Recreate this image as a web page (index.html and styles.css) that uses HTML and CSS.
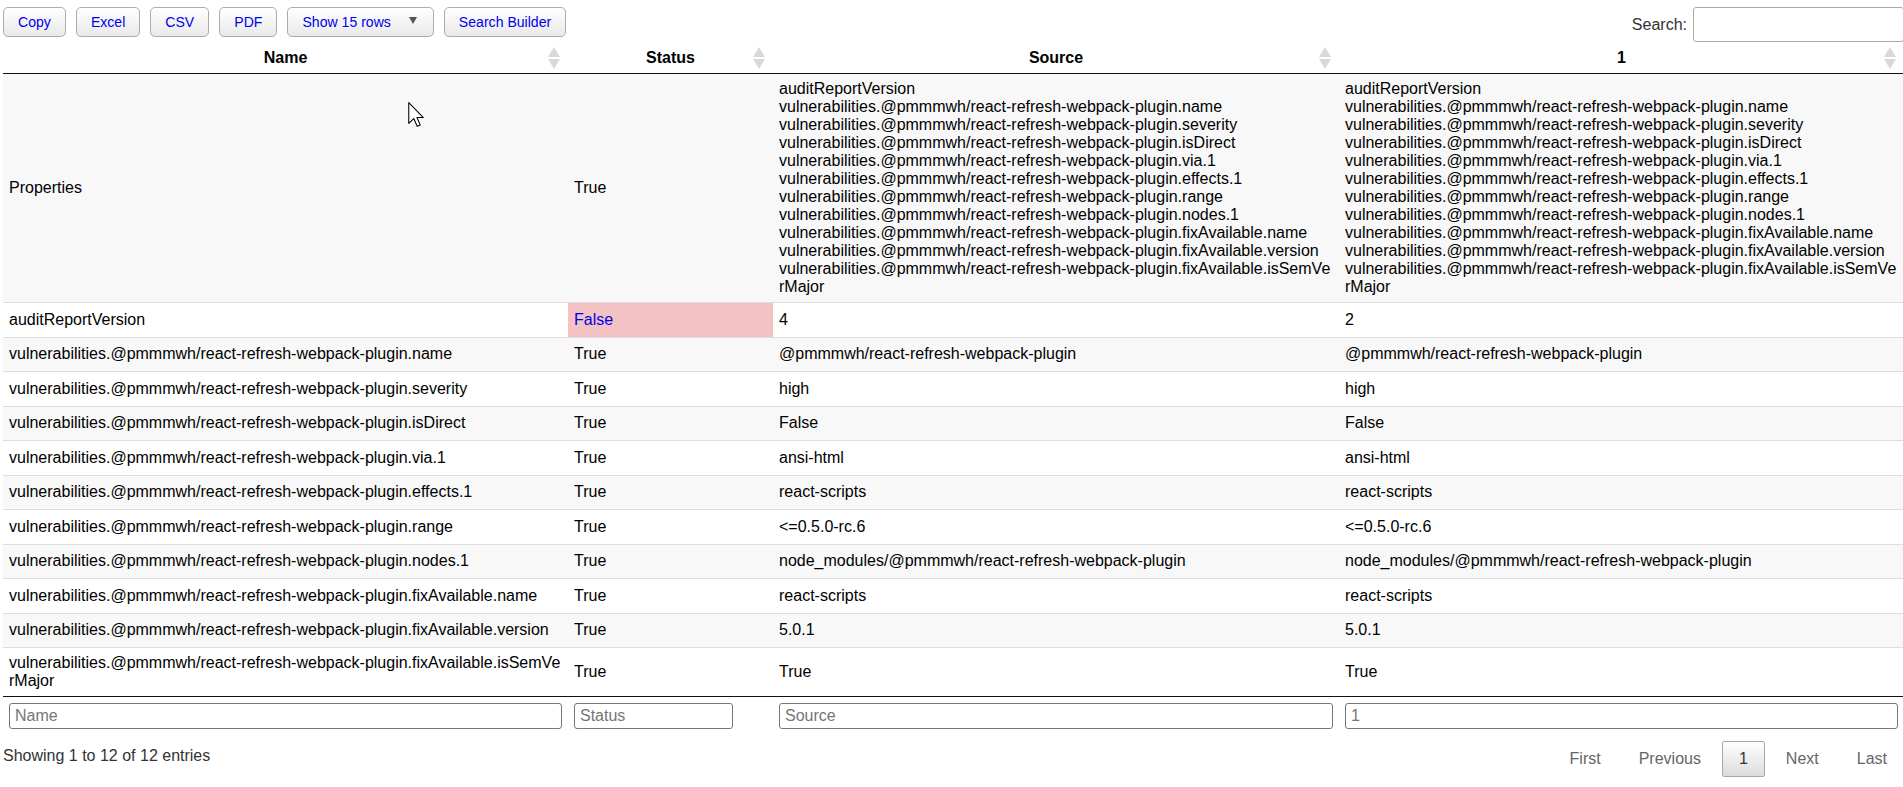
FILE: index.html
```html
<!DOCTYPE html>
<html>
<head>
<meta charset="utf-8">
<title>Comparison</title>
<link rel="stylesheet" href="styles.css">
</head>
<body>
<div class="wrap">
  <div class="toolbar">
    <div class="btns">
      <button class="dtb">Copy</button>
      <button class="dtb">Excel</button>
      <button class="dtb">CSV</button>
      <button class="dtb">PDF</button>
      <button class="dtb dtb-coll">Show 15 rows<svg class="darr" viewBox="0 0 8 7"><polygon points="0,0 8,0 4,7" fill="#555"/></svg></button>
      <button class="dtb">Search Builder</button>
    </div>
    <label class="search">Search:<input type="search" class="search-input"></label>
  </div>

  <table class="dt">
    <colgroup>
      <col class="c-name">
      <col class="c-status">
      <col class="c-source">
      <col class="c-one">
    </colgroup>
    <thead>
      <tr>
        <th>Name<svg class="sort" viewBox="0 0 12 22"><polygon points="0,10 6,0 12,10" /><polygon points="0,12 12,12 6,22" /></svg></th>
        <th>Status<svg class="sort" viewBox="0 0 12 22"><polygon points="0,10 6,0 12,10" /><polygon points="0,12 12,12 6,22" /></svg></th>
        <th>Source<svg class="sort" viewBox="0 0 12 22"><polygon points="0,10 6,0 12,10" /><polygon points="0,12 12,12 6,22" /></svg></th>
        <th>1<svg class="sort" viewBox="0 0 12 22"><polygon points="0,10 6,0 12,10" /><polygon points="0,12 12,12 6,22" /></svg></th>
      </tr>
    </thead>
    <tbody>
      <tr>
        <td>Properties</td>
        <td>True</td>
        <td>auditReportVersion<br>vulnerabilities.@pmmmwh/react-refresh-webpack-plugin.name<br>vulnerabilities.@pmmmwh/react-refresh-webpack-plugin.severity<br>vulnerabilities.@pmmmwh/react-refresh-webpack-plugin.isDirect<br>vulnerabilities.@pmmmwh/react-refresh-webpack-plugin.via.1<br>vulnerabilities.@pmmmwh/react-refresh-webpack-plugin.effects.1<br>vulnerabilities.@pmmmwh/react-refresh-webpack-plugin.range<br>vulnerabilities.@pmmmwh/react-refresh-webpack-plugin.nodes.1<br>vulnerabilities.@pmmmwh/react-refresh-webpack-plugin.fixAvailable.name<br>vulnerabilities.@pmmmwh/react-refresh-webpack-plugin.fixAvailable.version<br>vulnerabilities.@pmmmwh/react-refresh-webpack-plugin.fixAvailable.isSemVerMajor</td>
        <td>auditReportVersion<br>vulnerabilities.@pmmmwh/react-refresh-webpack-plugin.name<br>vulnerabilities.@pmmmwh/react-refresh-webpack-plugin.severity<br>vulnerabilities.@pmmmwh/react-refresh-webpack-plugin.isDirect<br>vulnerabilities.@pmmmwh/react-refresh-webpack-plugin.via.1<br>vulnerabilities.@pmmmwh/react-refresh-webpack-plugin.effects.1<br>vulnerabilities.@pmmmwh/react-refresh-webpack-plugin.range<br>vulnerabilities.@pmmmwh/react-refresh-webpack-plugin.nodes.1<br>vulnerabilities.@pmmmwh/react-refresh-webpack-plugin.fixAvailable.name<br>vulnerabilities.@pmmmwh/react-refresh-webpack-plugin.fixAvailable.version<br>vulnerabilities.@pmmmwh/react-refresh-webpack-plugin.fixAvailable.isSemVerMajor</td>
      </tr>
      <tr>
        <td>auditReportVersion</td>
        <td class="bad">False</td>
        <td>4</td>
        <td>2</td>
      </tr>
      <tr>
        <td>vulnerabilities.@pmmmwh/react-refresh-webpack-plugin.name</td>
        <td>True</td>
        <td>@pmmmwh/react-refresh-webpack-plugin</td>
        <td>@pmmmwh/react-refresh-webpack-plugin</td>
      </tr>
      <tr>
        <td>vulnerabilities.@pmmmwh/react-refresh-webpack-plugin.severity</td>
        <td>True</td>
        <td>high</td>
        <td>high</td>
      </tr>
      <tr>
        <td>vulnerabilities.@pmmmwh/react-refresh-webpack-plugin.isDirect</td>
        <td>True</td>
        <td>False</td>
        <td>False</td>
      </tr>
      <tr>
        <td>vulnerabilities.@pmmmwh/react-refresh-webpack-plugin.via.1</td>
        <td>True</td>
        <td>ansi-html</td>
        <td>ansi-html</td>
      </tr>
      <tr>
        <td>vulnerabilities.@pmmmwh/react-refresh-webpack-plugin.effects.1</td>
        <td>True</td>
        <td>react-scripts</td>
        <td>react-scripts</td>
      </tr>
      <tr>
        <td>vulnerabilities.@pmmmwh/react-refresh-webpack-plugin.range</td>
        <td>True</td>
        <td>&lt;=0.5.0-rc.6</td>
        <td>&lt;=0.5.0-rc.6</td>
      </tr>
      <tr>
        <td>vulnerabilities.@pmmmwh/react-refresh-webpack-plugin.nodes.1</td>
        <td>True</td>
        <td>node_modules/@pmmmwh/react-refresh-webpack-plugin</td>
        <td>node_modules/@pmmmwh/react-refresh-webpack-plugin</td>
      </tr>
      <tr>
        <td>vulnerabilities.@pmmmwh/react-refresh-webpack-plugin.fixAvailable.name</td>
        <td>True</td>
        <td>react-scripts</td>
        <td>react-scripts</td>
      </tr>
      <tr>
        <td>vulnerabilities.@pmmmwh/react-refresh-webpack-plugin.fixAvailable.version</td>
        <td>True</td>
        <td>5.0.1</td>
        <td>5.0.1</td>
      </tr>
      <tr>
        <td>vulnerabilities.@pmmmwh/react-refresh-webpack-plugin.fixAvailable.isSemVerMajor</td>
        <td>True</td>
        <td>True</td>
        <td>True</td>
      </tr>
    </tbody>
    <tfoot>
      <tr>
        <td><input class="fin" type="text" placeholder="Name"></td>
        <td><input class="fin fin-sm" type="text" placeholder="Status"></td>
        <td><input class="fin" type="text" placeholder="Source"></td>
        <td><input class="fin" type="text" placeholder="1"></td>
      </tr>
    </tfoot>
  </table>

  <div class="bottom">
    <div class="info">Showing 1 to 12 of 12 entries</div>
    <div class="paginate">
      <a class="pb">First</a>
      <a class="pb">Previous</a>
      <a class="pb current">1</a>
      <a class="pb">Next</a>
      <a class="pb">Last</a>
    </div>
  </div>
</div>
<svg class="cursor" viewBox="0 0 12 19"><path d="M0.5 0.5 L0.5 16.2 L4.3 12.6 L6.9 18.4 L9.2 17.4 L6.7 11.8 L11.6 11.8 Z" fill="#fff" stroke="#000" stroke-width="0.8" stroke-linejoin="round"/></svg>
</body>
</html>
```

FILE: styles.css
```css
html, body {
  margin: 0;
  padding: 0;
  overflow: hidden;
  background: #fff;
}

body {
  font-family: "Liberation Sans", Arial, sans-serif;
  font-size: 16px;
  line-height: 18px;
  color: #000;
}

.wrap {
  width: 1901px;
  padding: 7px 0 0 3px;
}

/* toolbar */
.toolbar {
  display: flex;
  justify-content: space-between;
  align-items: flex-start;
  height: 36px;
}

.btns {
  display: flex;
  gap: 10px;
}

.dtb {
  display: flex;
  align-items: center;
  box-sizing: border-box;
  height: 30px;
  padding: 6px 14px;
  font-family: "Liberation Sans", Arial, sans-serif;
  font-size: 14.08px;
  line-height: 16px;
  color: #0000ee;
  background: linear-gradient(to bottom, #ffffff 0%, #e9e9e9 100%);
  border: 1px solid #acacac;
  border-radius: 5px;
  cursor: pointer;
}

.dtb-coll {
  padding-right: 16px;
}

.darr {
  width: 8px;
  height: 7px;
  margin-left: 18px;
  margin-top: -4px;
}

.search {
  display: flex;
  align-items: center;
  color: #333;
  font-size: 16px;
}

.search-input {
  box-sizing: border-box;
  width: 211px;
  height: 35px;
  margin-left: 6px;
  padding: 5px;
  font: inherit;
  border: 1px solid #aaa;
  border-radius: 3px;
  background: #fff;
}

/* table */
.dt {
  width: 1901px;
  table-layout: fixed;
  border-collapse: separate;
  border-spacing: 0;
}

.c-name { width: 565px; }
.c-status { width: 205px; }
.c-source { width: 566px; }
.c-one { width: 565px; }

.dt thead th {
  position: relative;
  padding: 6px 18px;
  font-weight: bold;
  text-align: center;
  line-height: 18px;
  border-bottom: 1px solid #111;
}

.sort {
  position: absolute;
  right: 8px;
  top: 50%;
  width: 12px;
  height: 22px;
  margin-top: -11px;
  fill: #d9d9d9;
}

.dt tbody td {
  box-sizing: border-box;
  height: 34.5px;
  padding: 6px;
  line-height: 18px;
  vertical-align: middle;
  border-top: 1px solid #ddd;
  word-break: break-all;
}

.dt tbody tr:first-child td {
  border-top: none;
}

.dt tbody tr:nth-child(odd) td {
  background: #f8f8f8;
}

.dt tbody td.bad {
  background: #f3c3c3;
  color: #0000ee;
}

.dt tfoot td {
  padding: 6px;
  border-top: 1px solid #111;
}

.fin {
  box-sizing: border-box;
  width: 100%;
  height: 26px;
  padding: 3px 5px;
  font-family: "Liberation Sans", Arial, sans-serif;
  font-size: 16px;
  line-height: 18px;
  color: #000;
  border: 1px solid #767676;
  border-radius: 3px;
  background: #fff;
}

.fin::placeholder {
  color: #757575;
}

.fin-sm {
  width: 159px;
}

/* bottom */
.bottom {
  display: flex;
  justify-content: space-between;
  align-items: flex-start;
  padding-top: 6px;
}

.info {
  padding-top: 6px;
  color: #333;
}

.paginate {
  display: flex;
  gap: 4px;
}

.pb {
  display: block;
  padding: 8px 16px;
  line-height: 18px;
  color: #666;
  border: 1px solid transparent;
  border-radius: 2px;
  cursor: default;
}

.pb.current {
  color: #333;
  border-color: #a8a8a8;
  background: linear-gradient(to bottom, #ffffff 0%, #dcdcdc 100%);
}

.cursor {
  position: absolute;
  left: 408px;
  top: 102px;
  width: 16px;
  height: 25px;
}
```
